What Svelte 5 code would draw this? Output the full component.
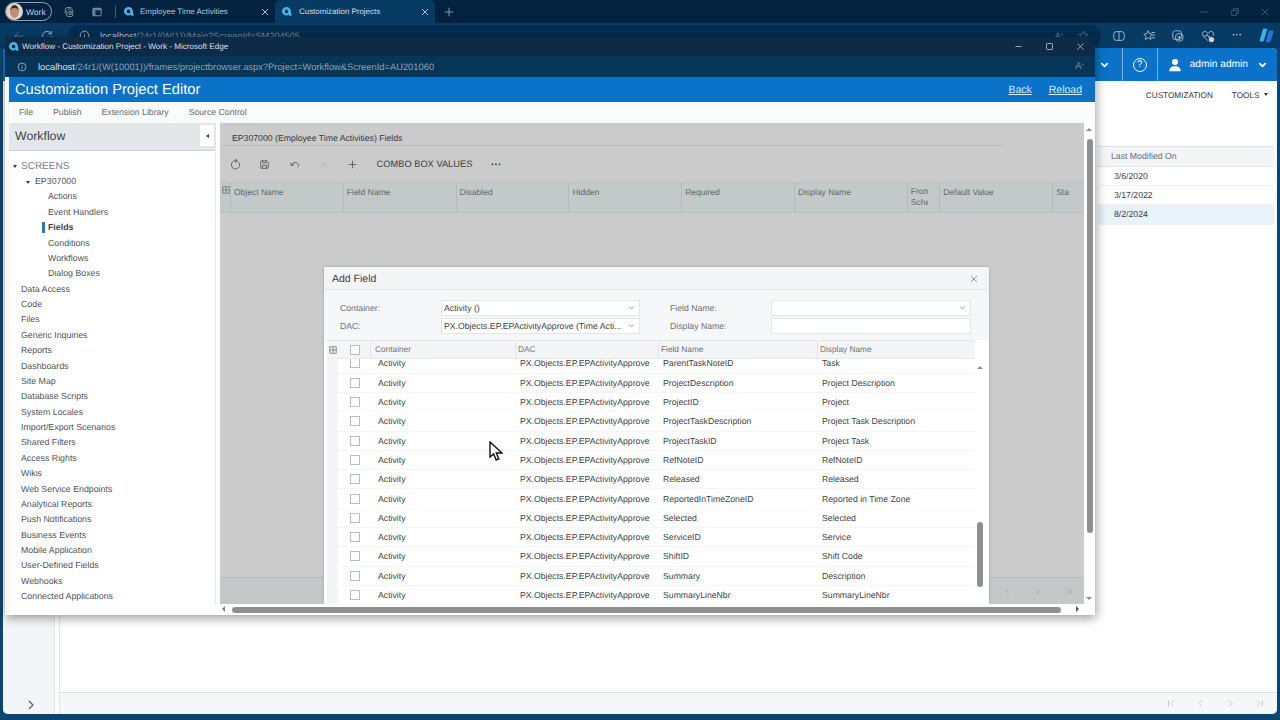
<script>
  const tree = ['Data Access','Code','Files','Generic Inquiries','Reports','Dashboards','Site Map','Database Scripts','System Locales','Import/Export Scenarios','Shared Filters','Access Rights','Wikis','Web Service Endpoints','Analytical Reports','Push Notifications','Business Events','Mobile Application','User-Defined Fields','Webhooks','Connected Applications'];
  const subs = ['Actions','Event Handlers','Fields','Conditions','Workflows','Dialog Boxes'];
  const rows = [['ParentTaskNoteID','Task'],['ProjectDescription','Project Description'],['ProjectID','Project'],['ProjectTaskDescription','Project Task Description'],['ProjectTaskID','Project Task'],['RefNoteID','RefNoteID'],['Released','Released'],['ReportedInTimeZoneID','Reported in Time Zone'],['Selected','Selected'],['ServiceID','Service'],['ShiftID','Shift Code'],['Summary','Description'],['SummaryLineNbr','SummaryLineNbr']];
  const bgCols = ['Object Name','Field Name','Disabled','Hidden','Required','Display Name'];
  const logo = 'M8 1.5a6.3 6.3 0 0 1 6 4.3L15.500 14h-3.400l-.6-1.500A6.200 6.200 0 1 1 8 1.500zm0 3.700a2.700 2.700 0 1 0 0 5.400 2.700 2.700 0 0 0 0-5.400z';
</script>

<div class="desk">
  <div class="tabbar">
    <div class="profile"><span class="avatar"><span class="face"></span></span><span>Work</span></div>
    <svg class="ti" viewBox="0 0 16 16"><path d="M6 4h5a2 2 0 0 1 2 2v6a2 2 0 0 1-2 2H7a2 2 0 0 1-2-2V6M3 10V5a3 3 0 0 1 3-3h5"/><path d="M8 7h3v4H8z"/></svg>
    <svg class="ti" viewBox="0 0 16 16"><rect x="2.500" y="3" width="11" height="10" rx="1"/><path class="tifill" d="M2.500 3h11v3h-11zM2.500 6H6v7H2.500z"/></svg>
    <span class="sep"></span>
    <div class="tab">
      <svg class="logo" viewBox="0 0 16 16"><path d={logo} fill-rule="evenodd"/></svg>
      <span>Employee Time Activities</span><svg class="tx" viewBox="0 0 8 8"><path d="M1 1l6 6M7 1L1 7"/></svg>
    </div>
    <div class="tab on">
      <svg class="logo" viewBox="0 0 16 16"><path d={logo} fill-rule="evenodd"/></svg>
      <span>Customization Projects</span><svg class="tx" viewBox="0 0 8 8"><path d="M1 1l6 6M7 1L1 7"/></svg>
    </div>
    <svg class="plus" viewBox="0 0 12 12"><path d="M6 1v10M1 6h10"/></svg>
    <div class="winbtns">
      <svg viewBox="0 0 12 12"><path d="M1 6h9"/></svg>
      <svg viewBox="0 0 12 12"><path d="M2 4h6v6H2zM4 4V2h6v6H8"/></svg>
      <svg viewBox="0 0 12 12"><path d="M2 2l8 8M10 2l-8 8"/></svg>
    </div>
  </div>
  <div class="toolbar">
    <svg class="nav" viewBox="0 0 14 14"><path d="M12 7H2M7 2L2 7l5 5"/></svg>
    <svg class="nav nav2" viewBox="0 0 14 14"><path d="M11.500 4A5.500 5.500 0 1 0 12.500 7M12 1v3.500H8.500"/></svg>
    <div class="backurl">
      <svg class="binfo" viewBox="0 0 14 14"><circle cx="7" cy="7" r="5.500"/><path d="M7 6.300v3.500M7 4v1.200"/></svg>
      <span class="bu"><b>localhost</b>/24r1/(W(1))/Main?ScreenId=SM204505</span>
      <span class="baa">A<sup>ₐ</sup></span>
      <svg class="bstar" viewBox="0 0 14 14"><path d="M7 1.500l1.700 3.600 3.800.5-2.800 2.600.7 3.800L7 10.100 3.600 12l.7-3.800L1.500 5.600l3.800-.5z"/></svg>
    </div>
    <div class="tbicons">
      <svg viewBox="0 0 16 16"><rect x="2" y="3" width="12" height="10" rx="3"/><path d="M8 3v10"/></svg>
      <svg viewBox="0 0 16 16"><path d="M7 2l1.600 3.500 3.400.4-2.500 2.400.7 3.600L7 10l-3.200 1.900.7-3.600L2 5.900l3.400-.4zM11 4h4M12 7h3M11 10h4"/></svg>
      <svg viewBox="0 0 16 16"><rect x="2" y="2" width="10" height="10" rx="3"/><circle cx="9.500" cy="9.500" r="4.500"/><path d="M9.500 7.500v4M7.500 9.500h4"/></svg>
      <svg viewBox="0 0 16 16"><path d="M8 13.500L2.500 8a3 3 0 0 1 4-4.500L8 5l1.500-1.500a3 3 0 0 1 4 4.500"/><path d="M3 8h3l1-2 2 4 1-2"/><circle class="fillw" cx="12" cy="12" r="3"/></svg>
      <span class="dots">···</span>
      <svg class="copilot" viewBox="0 0 20 20"><path class="c1" d="M6 2h5L7 16c-.5 1.600-5 2-5 0z"/><path class="c2" d="M13 4h4c1 0 1.500 1 1 3l-3 9c-.5 1.500-1.500 2-3 2H9z"/></svg>
    </div>
  </div>

  <div class="backpage">
    <div class="bp-head">
      <svg class="chev" viewBox="0 0 12 12"><path d="M2.500 4.500L6 8l3.500-3.500"/></svg>
      <span class="bp-div d1"></span>
      <span class="bp-help">?</span>
      <span class="bp-div d2"></span>
      <svg class="user" viewBox="0 0 16 16"><circle cx="8" cy="4.500" r="3.500"/><path d="M1.500 15c0-4 3-5.500 6.500-5.500s6.500 1.500 6.500 5.500z"/></svg>
      <span class="uname">admin admin</span>
      <svg class="chev" viewBox="0 0 12 12"><path d="M2.500 4.500L6 8l3.500-3.500"/></svg>
    </div>
    <div class="bp-body">
      <div class="rail"><svg viewBox="0 0 10 10"><path d="M3 1l4 4-4 4"/></svg></div>
      <div class="bp-content">
        <div class="bp-tools"><span>CUSTOMIZATION</span><span>TOOLS&nbsp; <i class="caret"></i></span></div>
        <div class="bp-grid">
          <div class="bp-th">Last Modified On</div>
          <div class="bp-td">3/6/2020</div>
          <div class="bp-td">3/17/2022</div>
          <div class="bp-td sel">8/2/2024</div>
        </div>
        <div class="bp-main"><div class="pager">
          <svg viewBox="0 0 12 12"><path d="M2 2v8M9 2L5 6l4 4"/></svg>
          <svg viewBox="0 0 12 12"><path d="M8 2L4 6l4 4"/></svg>
          <svg viewBox="0 0 12 12"><path d="M4 2l4 4-4 4"/></svg>
          <svg viewBox="0 0 12 12"><path d="M3 2l4 4-4 4M10 2v8"/></svg>
        </div></div>
      </div>
    </div>
  </div>

  <div class="win">
    <div class="w-title">
      <svg class="logo" viewBox="0 0 16 16"><path d={logo} fill-rule="evenodd"/></svg>
      <span>Workflow - Customization Project - Work - Microsoft Edge</span>
      <div class="w-btns">
        <svg viewBox="0 0 12 12"><path d="M2 6h8"/></svg>
        <svg viewBox="0 0 12 12"><rect x="2" y="2" width="8" height="8" rx="1"/></svg>
        <svg viewBox="0 0 12 12"><path d="M2 2l8 8M10 2l-8 8"/></svg>
      </div>
    </div>
    <div class="w-addr">
      <svg class="info" viewBox="0 0 14 14"><circle cx="7" cy="7" r="5.500"/><path d="M7 6.300v3.500M7 4v1.200"/></svg>
      <span><b>localhost</b>/24r1/(W(10001))/frames/projectbrowser.aspx?Project=Workflow&amp;ScreenId=AU201060</span>
      <span class="aa">A<sup>ₐ</sup></span>
    </div>
    <div class="w-body">
      <div class="appbar"><span class="apptitle">Customization Project Editor</span><span class="applinks"><u>Back</u><u>Reload</u></span></div>
      <div class="menu"><span>File</span><span>Publish</span><span>Extension Library</span><span>Source Control</span></div>
      <div class="work">
        <aside class="side">
          <div class="side-h"><span>Workflow</span><span class="coll"><i></i></span></div>
          <div class="tree">
            <div class="t t-h"><i class="tri"></i>SCREENS</div>
            <div class="t t-1"><i class="tri"></i>EP307000</div>
            {#each subs as s}
              <div class="t t-2" class:cur={s === 'Fields'}>{s}</div>
            {/each}
            {#each tree as t}
              <div class="t t-0">{t}</div>
            {/each}
          </div>
        </aside>
        <section class="pane">
          <div class="main">
            <div class="crumb">EP307000 (Employee Time Activities) Fields</div>
            <div class="acts">
              <svg viewBox="0 0 16 16"><path d="M12.500 4.500A6 6 0 1 1 8 2.500M8 .5v4l3-2z"/></svg>
              <svg viewBox="0 0 16 16"><path d="M2.500 3.500a1 1 0 0 1 1-1h8l2 2v8a1 1 0 0 1-1 1h-9a1 1 0 0 1-1-1zM5.500 2.500v3h5v-3M5 13.500V9h6v4.500"/></svg>
              <svg viewBox="0 0 16 16"><path d="M4 9.500A5 5 0 0 1 13 7a4 4 0 0 1 0 5M2.500 5l1 4.500 4-1.500"/></svg>
              <svg class="dim" viewBox="0 0 16 16"><path d="M4 4l8 8M12 4l-8 8"/></svg>
              <svg viewBox="0 0 16 16"><path d="M8 2.500v11M2.500 8h11"/></svg>
              <span class="cb">COMBO BOX VALUES</span>
              <span class="more">···</span>
            </div>
            <div class="bg-head">
              <span class="cfg"><svg viewBox="0 0 10 10"><rect x="1" y="1" width="8" height="8"/><path d="M1 5h8M5 1v8"/></svg></span>
              {#each bgCols as c}<span class="bh">{c}</span>{/each}
              <span class="bh from"><span class="clip">From<br>Schedule</span></span>
              <span class="bh dv">Default Value</span>
              <span class="bh sta">Sta</span>
            </div>
            <div class="bg-body"></div>
            <div class="bg-foot">
              <svg viewBox="0 0 12 12"><path d="M8 2L4 6l4 4"/></svg>
              <svg viewBox="0 0 12 12"><path d="M4 2l4 4-4 4"/></svg>
              <svg viewBox="0 0 12 12"><path d="M3 2l4 4-4 4M10 2v8"/></svg>
            </div>
          </div>
          <div class="vs"><i class="up"></i><div class="vtrack"><span></span></div><i class="dn"></i></div>

          <div class="dlg">
            <div class="dlg-h"><span>Add Field</span><svg viewBox="0 0 12 12"><path d="M1.500 1.500l9 9M10.500 1.500l-9 9"/></svg></div>
            <div class="form">
              <div class="frow">
                <label>Container:</label><div class="inp"><span>Activity ()</span><svg viewBox="0 0 8 8"><path d="M1.500 3L4 5.500 6.500 3"/></svg></div>
                <label class="l2">Field Name:</label><div class="inp i2"><span></span><svg viewBox="0 0 8 8"><path d="M1.500 3L4 5.500 6.500 3"/></svg></div>
              </div>
              <div class="frow">
                <label>DAC:</label><div class="inp"><span>PX.Objects.EP.EPActivityApprove (Time Acti...</span><svg viewBox="0 0 8 8"><path d="M1.500 3L4 5.500 6.500 3"/></svg></div>
                <label class="l2">Display Name:</label><div class="inp i2"></div>
              </div>
            </div>
            <div class="gh">
              <span class="g0"><svg viewBox="0 0 10 10"><rect x="1" y="1" width="8" height="8"/><path d="M1 5h8M5 1v8"/></svg></span>
              <span class="g1"><i class="ck"></i></span>
              <span class="g2">Container</span><span class="g3">DAC</span><span class="g4">Field Name</span><span class="g5">Display Name</span>
            </div>
            <div class="gb">
              <div class="gscroll">
                {#each rows as r}
                  <div class="gr">
                    <span class="g0"></span><span class="g1"><i class="ck"></i></span>
                    <span class="g2">Activity</span><span class="g3">PX.Objects.EP.EPActivityApprove</span><span class="g4">{r[0]}</span><span class="g5">{r[1]}</span>
                  </div>
                {/each}
              </div>
              <i class="gup"></i>
              <span class="gthumb"></span>
            </div>
          </div>
        </section>
      </div>
      <div class="hs"><i class="lf"></i><div class="htrack"><span></span></div><i class="rt"></i></div>
    </div>
  </div>

  <svg class="cursor" viewBox="0 0 14 20"><path d="M1 1v15l3.600-3 2.600 6 2.600-1.200-2.500-5.800H13z"/></svg>
</div>

<style>
  :global(body) { margin: 0; background: #04284a; }
  .desk { position: relative; width: 1280px; height: 720px; overflow: hidden; background: #0a4672; font-family: "Liberation Sans", Arial, sans-serif; color: #3a3f44; text-rendering: geometricPrecision; }
  svg { fill: none; stroke: currentColor; stroke-width: 1; flex: none; }

  .tabbar { height: 23px; background: #03223f; display: flex; align-items: center; color: #b9c8d6; font-size: 7.950px; position: relative; }
  .profile { margin-left: 5px; height: 19px; width: 47px; box-sizing: border-box; border: 1px solid #8fa3b5; border-radius: 10px; display: flex; align-items: center; gap: 3px; font-size: 8.500px; color: #c8d3dd; }
  .avatar { width: 17px; height: 17px; border-radius: 50%; background: #e2d6cc; overflow: hidden; display: block; position: relative; }
  .face { position: absolute; left: 4px; top: 2px; width: 9px; height: 13px; background: #c08e74; border-radius: 50%; border-top: 3px solid #402c22; box-sizing: border-box; }
  .ti { width: 12px; height: 12px; margin-left: 11px; color: #9db0c0; }
  .ti + .ti { margin-left: 16px; }
  .tifill { fill: #9db0c0; stroke: none; opacity: .6; }
  .sep { width: 1px; height: 13px; background: #3d5a75; margin: 0 1px 0 12px; }
  .tab { width: 158px; height: 23px; box-sizing: border-box; padding: 0 6px; display: flex; align-items: center; gap: 6px; }
  .tab span { flex: 1; }
  .tx { width: 8px; height: 8px; color: #aebccb; }
  .tab.on { width: 160px; background: #073b63; border-radius: 6px 6px 0 0; color: #d5dfe8; }
  .tab.on .logo { margin-right: 1px; }
  .logo { width: 11px; height: 11px; fill: #4db2e5; stroke: none; }
  .plus { width: 10px; height: 10px; margin-left: 9px; color: #a5b5c4; }
  .winbtns { margin-left: auto; display: flex; gap: 20.500px; padding-right: 10px; color: #47617a; }
  .winbtns svg { width: 10px; height: 10px; }

  .toolbar { height: 25px; background: #073b63; display: flex; align-items: center; color: #6d8aa0; }
  .nav { width: 12px; height: 12px; margin-left: 13px; color: #5c7d97; }
  .nav2 { margin-left: 16px; color: #aebfce; }
  .backurl { margin-left: 15px; width: 1033px; height: 22px; border-radius: 11px; background: #042c4e; display: flex; align-items: center; flex: none; }
  .binfo { width: 11px; height: 11px; margin-left: 11px; color: #b8c6d2; }
  .bu { margin-left: 10px; font-size: 9.200px; color: #6f8799; }
  .bu b { color: #bcc9d4; font-weight: 400; }
  .baa { margin-left: auto; font-size: 9px; color: #5d7890; }
  .baa sup { font-size: 6px; }
  .bstar { width: 11px; height: 11px; margin: 0 12px 0 15px; color: #5d7890; }
  .tbicons { display: flex; align-items: center; margin-left: 11px; gap: 15.500px; color: #aebfce; }
  .tbicons svg { width: 14px; height: 14px; }
  .fillw { fill: #cfd8df; stroke: none; }
  .dots { font-size: 10px; font-weight: 700; width: 14px; text-align: center; }
  .tbicons .copilot { width: 17px; height: 17px; stroke: none; margin-left: -2px; }
  .c1 { fill: #34b3e8; stroke: none; }
  .c2 { fill: #1f78d8; stroke: none; }

  .backpage { position: absolute; left: 3px; top: 48px; width: 1274px; height: 666px; background: #fff; border-radius: 5px; overflow: hidden; display: flex; flex-direction: column; }
  .bp-head { height: 33px; background: #0a73c9; flex: none; display: flex; align-items: center; justify-content: flex-end; color: #fff; padding-right: 9.500px; box-sizing: border-box; }
  .chev { width: 11px; height: 11px; stroke-width: 1.800; }
  .bp-div { width: 1px; height: 33px; background: #70b0e4; flex: none; }
  .d1 { margin: 0 10px 0 12px; }
  .d2 { margin: 0 10px 0 10px; }
  .bp-help { width: 14px; height: 14px; box-sizing: border-box; border: 1.500px solid #fff; border-radius: 50%; text-align: center; font-size: 9.500px; line-height: 11px; }
  .user { width: 14px; height: 14px; fill: #fff; stroke: none; }
  .uname { font-size: 10.200px; margin: 0 8.500px 0 8px; }
  .bp-body { flex: 1; min-height: 0; display: flex; }
  .rail { width: 52px; flex: none; background: #f3f6f7; border-right: 1px solid #e1e5e8; display: flex; align-items: flex-end; justify-content: center; padding: 0 0 3px 4px; box-sizing: border-box; color: #5c6770; }
  .rail svg { width: 10px; height: 12px; stroke-width: 1.300; }
  .bp-content { flex: 1; min-width: 0; margin-left: 4px; border-left: 1px solid #e4e7ea; display: flex; flex-direction: column; }
  .bp-tools { height: 28px; flex: none; display: flex; justify-content: flex-end; gap: 19px; align-items: center; padding-right: 9px; font-size: 8.200px; color: #2f3438; }
  .caret { display: inline-block; border: 2.500px solid transparent; border-top: 3px solid #333; border-bottom: 0; vertical-align: 1.500px; }
  .bp-grid { margin: 37px 3px 0 auto; width: 176px; flex: none; font-size: 8.700px; border-top: 1px solid #dfe3e6; }
  .bp-th { height: 19px; line-height: 18px; background: #f3f5f6; padding-left: 13px; color: #666c72; border-bottom: 1px solid #e2e5e8; }
  .bp-td { height: 19.200px; box-sizing: border-box; line-height: 18px; padding-left: 16px; border-bottom: 1px solid #f0f1f3; color: #3a3f44; }
  .bp-td.sel { background: #e9f2f8; }
  .bp-main { margin-top: auto; height: 22px; border-top: 1px solid #dde1e5; background: #f5f7f8; display: flex; justify-content: flex-end; box-sizing: border-box; }
  .pager { display: flex; align-items: center; gap: 20.500px; padding-right: 13px; color: #b4bcc3; }
  .pager svg { width: 9px; height: 9px; }

  .win { position: absolute; left: 5px; top: 37px; width: 1090px; height: 578px; display: flex; flex-direction: column; box-shadow: 1px 3px 10px rgba(0,0,0,.4); background: #fff; }
  .w-title { height: 19px; background: #0d2a47; color: #d9e1e8; display: flex; align-items: center; font-size: 8.100px; padding-left: 3px; gap: 3px; flex: none; }
  .w-btns { margin-left: auto; display: flex; gap: 22px; padding-right: 10px; color: #c8d3dd; }
  .w-btns svg { width: 9px; height: 9px; }
  .w-addr { height: 21px; background: #073557; color: #8ba1b3; font-size: 9.350px; display: flex; align-items: center; flex: none; padding-left: 12px; gap: 11px; }
  .w-addr b { font-weight: 400; color: #dbe4ea; }
  .info { width: 10px; height: 10px; color: #b8c6d2; }
  .aa { margin-left: auto; margin-right: 11px; font-size: 10px; color: #6e8597; }
  .aa sup { font-size: 6px; }
  .w-body { flex: 1; min-height: 0; display: flex; flex-direction: column; position: relative; background: #fff; border-left: 4px solid #f5f7f8; box-sizing: border-box; }
  .appbar { height: 25px; background: #0a73c9; color: #fff; display: flex; align-items: center; justify-content: space-between; padding: 0 13px 0 6px; flex: none; }
  .apptitle { font-size: 14.700px; }
  .applinks { display: flex; gap: 17px; font-size: 10.500px; color: #d4ebfb; }
  .menu { height: 21px; padding-bottom: 2px; box-sizing: border-box; background: #fafbfb; display: flex; align-items: center; gap: 20px; padding-left: 10px; font-size: 8.700px; color: #636a70; flex: none; }
  .work { height: 481px; flex: none; display: flex; }
  .side { width: 206px; flex: none; background: #fff; border-right: 1px solid #e4e7ea; }
  .side-h { height: 28px; box-sizing: border-box; padding-bottom: 2px; background: #e3e7e9; border-bottom: 1px solid #cfd3d6; display: flex; align-items: center; justify-content: space-between; font-size: 12.300px; padding-left: 6px; color: #3d4348; }
  .coll { width: 14px; height: 21px; background: #fff; display: flex; align-items: center; justify-content: center; margin-right: 1px; }
  .coll i { border: 2.500px solid transparent; border-right: 3px solid #333; border-left: 0; }
  .tree { padding-top: 7px; font-size: 8.800px; color: #4e5459; }
  .t { height: 15.380px; line-height: 15.380px; position: relative; white-space: nowrap; }
  .t-h { font-size: 10px; padding-left: 12px; color: #7a8086; height: 16px; line-height: 18px; }
  .t-1 { padding-left: 26px; }
  .t-2 { padding-left: 39px; }
  .t-0 { padding-left: 12px; }
  .cur { font-weight: 700; color: #3c4146; }
  .cur::before { content: ""; position: absolute; left: 33px; top: 2px; width: 3px; height: 11px; background: #2479b9; }
  .tri { position: absolute; border: 2.500px solid transparent; border-top: 3px solid #3a3a3a; border-bottom: 0; top: 7px; }
  .t-h .tri { left: 4px; }
  .t-1 .tri { left: 17px; }

  .pane { flex: 1; min-width: 0; display: flex; position: relative; background: #fff; }
  .main { flex: 1; min-width: 0; background: #cbcbcb; display: flex; flex-direction: column; margin-left: 4px; color: #3a3a3a; }
  .crumb { margin: 0 82px 0 3px; padding: 8px 0 0 9px; height: 14px; font-size: 8.700px; border-bottom: 1px solid #bbbdbd; line-height: 14px; color: #36393b; }
  .acts { height: 36px; display: flex; align-items: center; padding-left: 10px; gap: 18.300px; color: #3d3f40; flex: none; }
  .acts svg { width: 11px; height: 11px; }
  .acts svg.dim { color: #aeb0b0; }
  .cb { font-size: 9.300px; margin-left: 0; }
  .more { font-weight: 700; font-size: 11px; margin: 2px 0 0 0; }
  .bg-head { height: 31px; display: flex; background: #c3c8c8; border-top: 1px solid #bcbfbf; border-bottom: 1px solid #bcbfbf; font-size: 8.500px; color: #66696a; flex: none; box-sizing: border-box; }
  .cfg { width: 11px; padding: 3px 0 0 2px; box-sizing: border-box; border-right: 1px solid #b6baba; color: #6e7272; flex: none; }
  .cfg svg { width: 8px; height: 8px; display: block; }
  .bh { width: 112.800px; border-right: 1px solid #b6baba; padding: 4px 0 0 3px; box-sizing: border-box; flex: none; }
  .bh.from { width: 32.400px; line-height: 11px; padding-top: 3px; }
  .clip { display: block; width: 17px; overflow: hidden; white-space: nowrap; }
  .bh.dv { width: 113px; }
  .bh.sta { width: 22px; border: 0; }
  .bg-body { flex: 1; }
  .bg-foot { height: 26px; border-top: 1px solid #b9bcbc; background: #c4c8c8; color: #a2a6a6; display: flex; align-items: center; justify-content: flex-end; gap: 21px; padding-right: 12px; flex: none; }
  .bg-foot svg { width: 9px; height: 9px; }

  .vs { width: 11px; flex: none; background: #fff; position: relative; }
  .vs i { position: absolute; left: 2px; border: 3px solid transparent; }
  .vs .up { top: 5px; border-bottom: 3px solid #8b8b8b; border-top: 0; }
  .vs .dn { bottom: 4px; border-top: 3px solid #8b8b8b; border-bottom: 0; }
  .vtrack span { position: absolute; left: 2.500px; top: 16px; width: 6px; height: 394px; background: #8f8f8f; border-radius: 3px; }

  .dlg { position: absolute; left: 108px; top: 144px; width: 665px; height: 337px; background: #fff; overflow: hidden; box-shadow: 0 0 3px rgba(0,0,0,.2); display: flex; flex-direction: column; }
  .dlg-h { height: 23px; box-sizing: border-box; padding: 2px 11px 0 8px; background: #f3f5f6; border-bottom: 1px solid #e3e6e8; flex: none; display: flex; align-items: center; justify-content: space-between; font-size: 10.500px; color: #3a3f44; }
  .dlg-h svg { width: 8px; height: 8px; color: #5f666c; }
  .form { background: #f5f7f8; height: 50px; flex: none; padding-top: 8.500px; box-sizing: border-box; }
  .frow { height: 18px; display: flex; align-items: center; font-size: 8.700px; }
  label { width: 117px; padding-left: 16px; box-sizing: border-box; color: #6b7075; flex: none; }
  label.l2 { width: 131px; padding-left: 30px; }
  .inp { width: 199px; height: 16px; background: #fff; border: 1px solid #e4e7e9; box-sizing: border-box; display: flex; align-items: center; justify-content: space-between; padding: 0 4px 0 2px; color: #3e4347; white-space: nowrap; overflow: hidden; flex: none; }
  .inp svg { width: 7px; height: 7px; color: #7c8287; }
  .inp.i2 { width: 200px; }
  .gh { height: 19px; box-sizing: border-box; flex: none; background: #f4f5f6; display: flex; align-items: center; font-size: 8.300px; color: #6f7479; border-top: 1px solid #e5e7e9; border-bottom: 1px solid #e8eaec; margin: 0 14px 0 3px; }
  .g0 { width: 11px; flex: none; height: 100%; display: flex; align-items: center; justify-content: center; }
  .g0 svg { width: 8px; height: 8px; color: #777; }
  .g1 { width: 32px; flex: none; display: flex; justify-content: center; padding-left: 1px; box-sizing: border-box; }
  .ck { display: block; width: 8px; height: 8px; background: #fff; border: 1px solid #b9bdc1; }
  .g2, .g3, .g4, .g5 { flex: none; box-sizing: border-box; white-space: nowrap; }
  .g2 { width: 145px; }
  .g3 { width: 143px; }
  .g4 { width: 159px; }
  .g5 { width: 158px; }
  .gh .g2, .gh .g3, .gh .g4, .gh .g5 { padding-left: 2px; border-left: 1px solid #e3e5e7; height: 100%; line-height: 17px; }
  .gh .g2 { padding-left: 4px; }
  .gb { flex: 1; min-height: 0; position: relative; overflow: hidden; margin-left: 3px; }
  .gscroll { margin-top: -4.700px; width: 648px; }
  .gr { height: 19.300px; display: flex; align-items: center; font-size: 8.700px; color: #3e4347; border-bottom: 1px solid #f4f5f6; box-sizing: border-box; }
  .gr .g0 { background: #f4f5f6; align-self: stretch; height: auto; }
  .gr .g2 { padding-left: 8px; }
  .gr .g3, .gr .g4, .gr .g5 { padding-left: 5px; }
  .gup { position: absolute; right: 6px; top: 7px; border: 3px solid transparent; border-bottom: 3px solid #8b8f92; border-top: 0; }
  .gthumb { position: absolute; right: 6px; top: 163px; width: 6px; height: 65px; background: #8f8f8f; border-radius: 3px; }

  .hs { height: 11px; flex: none; position: relative; background: #fff; }
  .hs i { position: absolute; top: 2px; border: 3px solid transparent; }
  .lf { left: 213px; border-right: 3px solid #808080 !important; border-left: 0 !important; }
  .rt { left: 1067px; border-left: 3px solid #555 !important; border-right: 0 !important; }
  .htrack span { position: absolute; left: 223px; top: 2.500px; width: 829px; height: 6px; background: #8f8f8f; border-radius: 3px; }

  .cursor { position: absolute; left: 488.500px; top: 441px; width: 14px; height: 20px; fill: #fff; stroke: #111; stroke-width: 1.400; }
</style>
